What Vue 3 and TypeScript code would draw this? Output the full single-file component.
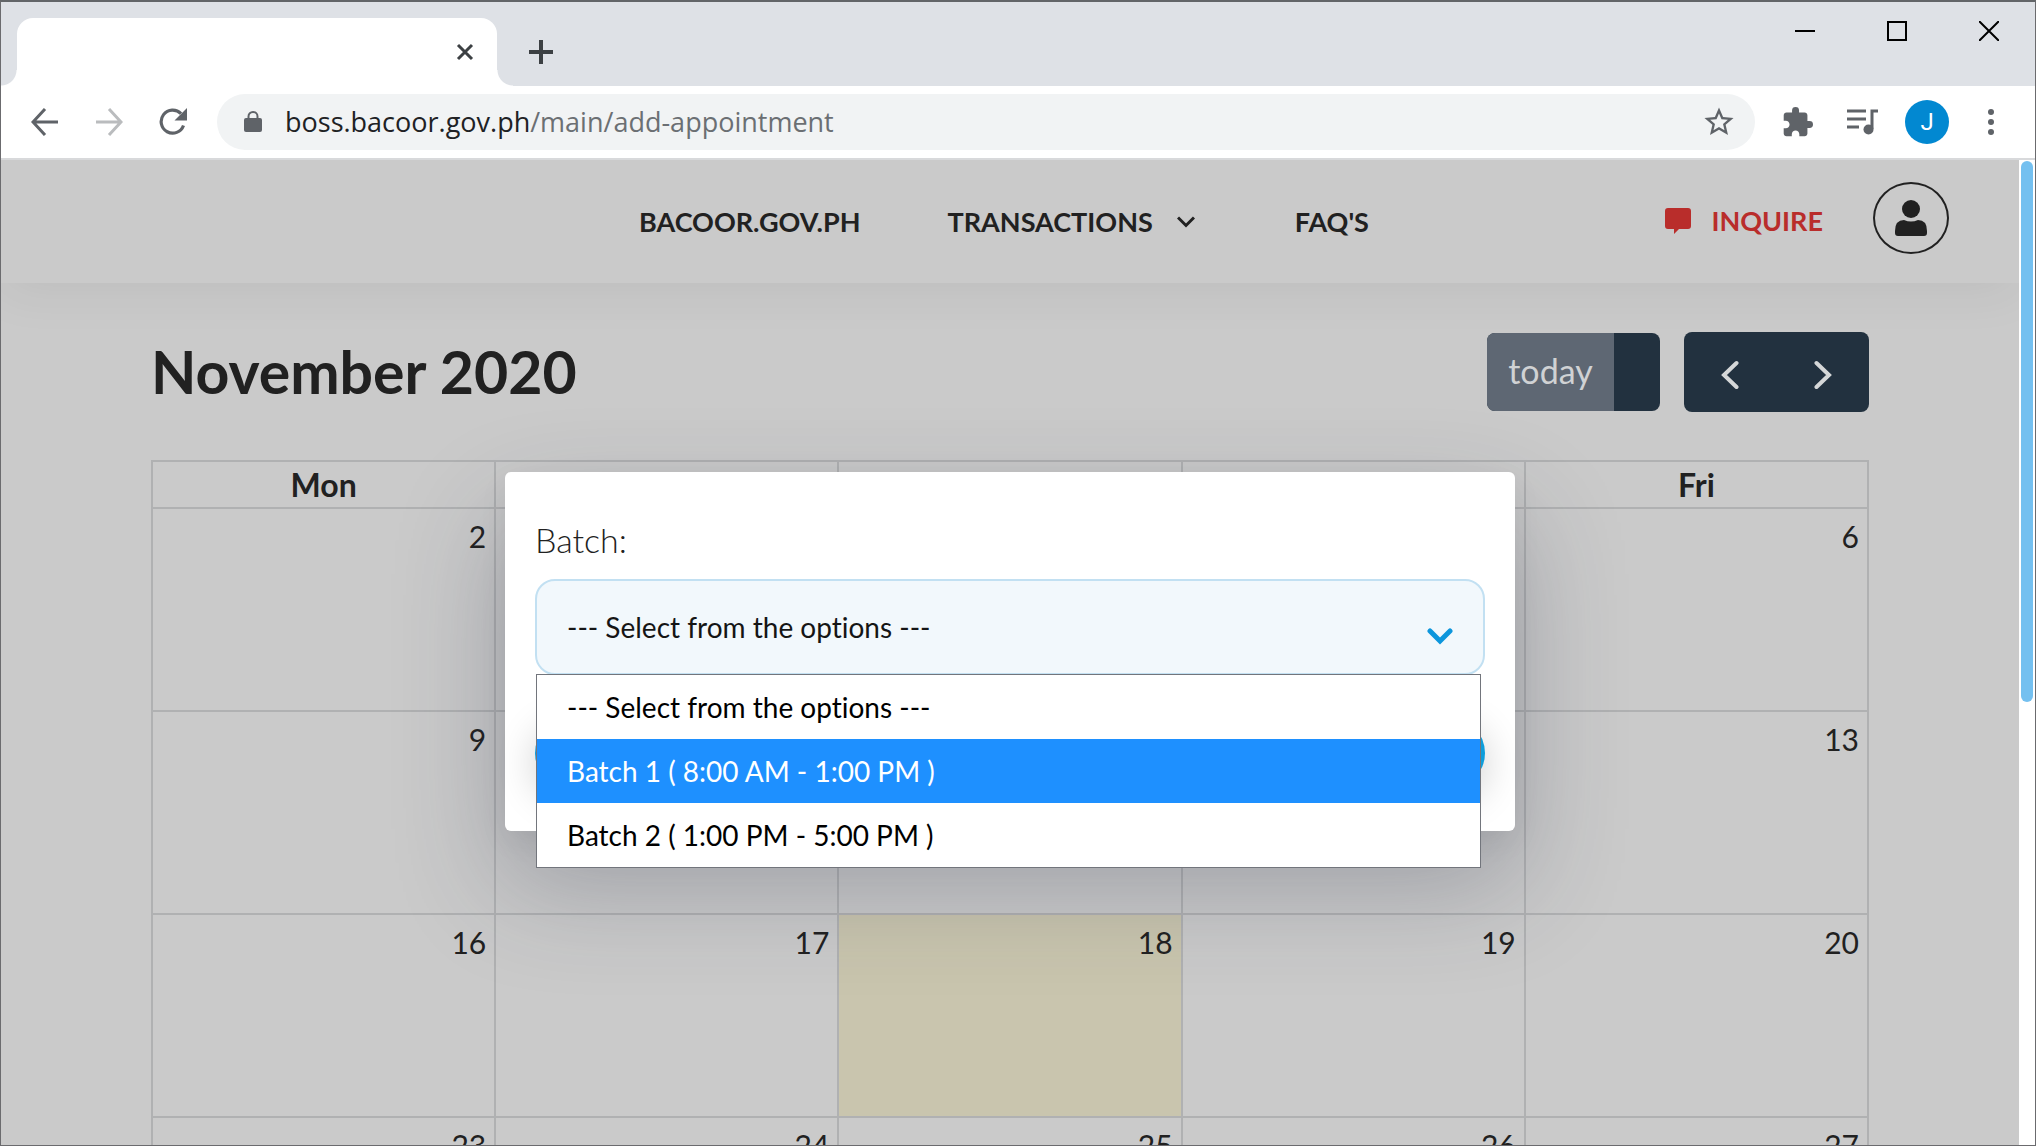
<script setup lang="ts">
import { ref } from 'vue'

interface Day {
  label: string
  today?: boolean
}

const weekdays: string[] = ['Mon', '', '', '', 'Fri']

const weeks: Day[][] = [
  [{ label: '2' }, { label: '' }, { label: '' }, { label: '' }, { label: '6' }],
  [{ label: '9' }, { label: '' }, { label: '' }, { label: '' }, { label: '13' }],
  [{ label: '16' }, { label: '17' }, { label: '18', today: true }, { label: '19' }, { label: '20' }],
  [{ label: '23' }, { label: '24' }, { label: '25' }, { label: '26' }, { label: '27' }],
]

const options: string[] = [
  '--- Select from the options ---',
  'Batch 1 ( 8:00 AM - 1:00 PM )',
  'Batch 2 ( 1:00 PM - 5:00 PM )',
]

const selected = ref(options[0])
const highlighted = ref(1)
</script>

<template>
  <div class="window">
    <div class="tabstrip">
      <div class="tab">
        <button class="plain" aria-label="Close tab">
          <svg width="18" height="18" viewBox="0 0 18 18"><path d="M2 2l14 14M16 2L2 16" stroke="#3c4043" stroke-width="3" fill="none" /></svg>
        </button>
      </div>
      <button class="plain new-tab" aria-label="New tab">
        <svg width="24" height="24" viewBox="0 0 24 24"><path d="M12 0v24M0 12h24" stroke="#3c4043" stroke-width="4" fill="none" /></svg>
      </button>
      <div class="controls">
        <button class="plain" aria-label="Minimize">
          <svg width="20" height="20" viewBox="0 0 20 20"><path d="M0 10h20" stroke="#000" stroke-width="2" /></svg>
        </button>
        <button class="plain" aria-label="Maximize">
          <svg width="20" height="20" viewBox="0 0 20 20"><path d="M1 1h18v18H1z" stroke="#000" stroke-width="2" fill="none" /></svg>
        </button>
        <button class="plain" aria-label="Close">
          <svg width="20" height="20" viewBox="0 0 20 20"><path d="M0 0l20 20M20 0L0 20" stroke="#000" stroke-width="2" fill="none" /></svg>
        </button>
      </div>
    </div>

    <div class="toolbar">
      <div class="nav-buttons">
        <button class="plain" aria-label="Back">
          <svg width="28" height="28" viewBox="0 0 28 28"><path d="M27 14H3M14 1L2 14l12 13" stroke="#5f6368" stroke-width="3" fill="none" /></svg>
        </button>
        <button class="plain" aria-label="Forward">
          <svg width="28" height="28" viewBox="0 0 28 28"><path d="M1 14h24M14 1l12 13-12 13" stroke="#babcbe" stroke-width="3" fill="none" /></svg>
        </button>
        <button class="plain" aria-label="Reload">
          <svg width="28" height="28" viewBox="0 0 28 28"><path d="M24.500 17.500A11.500 11.500 0 1 1 22 5.700" stroke="#5f6368" stroke-width="3.200" fill="none" /><path d="M28 0v12.500H15.500z" fill="#5f6368" /></svg>
        </button>
      </div>
      <div class="omnibox">
        <svg width="18" height="22" viewBox="0 0 18 22"><path d="M2 7h14q2 0 2 2v10q0 2-2 2H2q-2 0-2-2V9q0-2 2-2z" fill="#5f6368" /><path d="M4.500 8V5.500a4.500 4.500 0 0 1 9 0V8" stroke="#5f6368" stroke-width="2" fill="none" /></svg>
        <a class="url" href="#"><span class="host">boss.bacoor.gov.ph</span>/main/add-appointment</a>
        <button class="plain" aria-label="Bookmark">
          <svg width="32" height="32" viewBox="1 1 22 22"><path fill="#5f6368" d="M22 9.240l-7.190-.620L12 2 9.190 8.630 2 9.240l5.460 4.730L5.820 21 12 17.270 18.180 21l-1.630-7.030L22 9.240zM12 15.400l-3.760 2.270 1-4.280-3.320-2.880 4.380-.380L12 6.100l1.710 4.040 4.380.380-3.320 2.880 1 4.280L12 15.400z" /></svg>
        </button>
      </div>
      <div class="actions">
        <button class="plain" aria-label="Extensions">
          <svg width="30" height="30" viewBox="1.500 1 21.500 21.500"><path fill="#5f6368" d="M20.500 11H19V7c0-1.100-.900-2-2-2h-4V3.500a2.500 2.500 0 0 0-5 0V5H4c-1.100 0-1.990.900-1.990 2v3.800H3.500c1.490 0 2.700 1.210 2.700 2.700s-1.210 2.700-2.700 2.700H2V20c0 1.100.900 2 2 2h3.800v-1.500c0-1.490 1.210-2.700 2.700-2.700s2.700 1.210 2.700 2.700V22H17c1.100 0 2-.900 2-2v-4h1.500a2.500 2.500 0 0 0 0-5z" /></svg>
        </button>
        <button class="plain" aria-label="Media">
          <svg width="32" height="26" viewBox="0 0 32 26"><path d="M1 2h19M1 10h19M1 18h12" stroke="#5f6368" stroke-width="3" /><path d="M32 2h-6v18" stroke="#5f6368" stroke-width="3" fill="none" /><circle cx="22.500" cy="20.500" r="5" fill="#5f6368" /></svg>
        </button>
        <button class="plain avatar" aria-label="Profile">J</button>
        <button class="plain" aria-label="Menu">
          <svg width="6" height="26" viewBox="0 0 6 26"><g fill="#5f6368"><circle cx="3" cy="3" r="3" /><circle cx="3" cy="13" r="3" /><circle cx="3" cy="23" r="3" /></g></svg>
        </button>
      </div>
    </div>

    <div class="viewport">
      <div class="page">
        <header class="site-header">
          <nav class="menu">
            <a href="#">BACOOR.GOV.PH</a>
            <a href="#" class="with-icon">TRANSACTIONS
              <svg width="18" height="12" viewBox="0 0 18 12"><path d="M1 1.500l8 8 8-8" stroke="#212121" stroke-width="3" fill="none" /></svg>
            </a>
            <a href="#">FAQ'S</a>
          </nav>
          <div class="account">
            <a href="#" class="inquire">
              <svg width="26" height="26" viewBox="0 0 26 26"><path d="M3 0h20q3 0 3 3v15q0 3-3 3h-9l-5 5v-5H3q-3 0-3-3V3q0-3 3-3z" fill="#b92d2b" /></svg>
              INQUIRE
            </a>
            <button class="plain user" aria-label="Account">
              <svg width="32" height="36" viewBox="0 0 32 36"><circle cx="16" cy="9" r="9" fill="#212121" /><path d="M9 20q7 3 14 0 9 0 9 11v2q0 3-3 3H3q-3 0-3-3v-2q0-11 9-11z" fill="#212121" /></svg>
            </button>
          </div>
        </header>

        <main class="calendar">
          <div class="calendar-bar">
            <h1>November 2020</h1>
            <div class="today-group"><button class="today" disabled>today</button></div>
            <div class="step-group">
              <button aria-label="Previous">
                <svg width="18" height="30" viewBox="0 0 18 30"><path d="M15.500 3L3 15l12.500 12" stroke="#d5d7d8" stroke-width="4" stroke-linecap="round" fill="none" /></svg>
              </button>
              <button aria-label="Next">
                <svg width="18" height="30" viewBox="0 0 18 30"><path d="M2.500 3L15 15 2.500 27" stroke="#d5d7d8" stroke-width="4" stroke-linecap="round" fill="none" /></svg>
              </button>
            </div>
          </div>
          <table>
            <thead>
              <tr><th v-for="(day, i) in weekdays" :key="i" scope="col">{{ day }}</th></tr>
            </thead>
            <tbody>
              <tr v-for="(week, w) in weeks" :key="w">
                <td v-for="(day, d) in week" :key="d" :class="{ current: day.today }">{{ day.label }}</td>
              </tr>
            </tbody>
          </table>
        </main>

        <div class="overlay">
          <form class="modal" @submit.prevent>
            <label for="batch">Batch:</label>
            <div class="field">
              <select id="batch" v-model="selected">
                <option v-for="option in options" :key="option">{{ option }}</option>
              </select>
              <svg class="caret" width="26" height="18" viewBox="0 0 26 18"><path d="M3 3l10 10L23 3" stroke="#0d96dc" stroke-width="5" stroke-linecap="round" fill="none" /></svg>
              <ul class="dropdown" role="listbox">
                <li
                  v-for="(option, i) in options"
                  :key="option"
                  role="option"
                  :aria-selected="i === highlighted"
                  :class="{ active: i === highlighted }"
                  @mouseenter="highlighted = i"
                  @click="selected = option"
                >{{ option }}</li>
              </ul>
            </div>
            <button class="submit" type="submit" aria-label="Submit"></button>
          </form>
        </div>
      </div>
      <div class="scrollbar"><div class="thumb"></div></div>
    </div>
  </div>
</template>

<style>
body {
  overflow: hidden;
}
</style>

<style scoped>
* {
  box-sizing: border-box;
}
.window {
  display: flex;
  flex-direction: column;
  height: 100vh;
  border: 1px solid #6b6b6e;
  border-top: 2px solid #626568;
  font-family: Lato, 'Open Sans', sans-serif;
  font-variant-ligatures: none;
  color: #212121;
}
svg {
  display: block;
  flex: none;
}
a {
  color: inherit;
  text-decoration: none;
}
.plain {
  display: flex;
  align-items: center;
  justify-content: center;
  flex: none;
  padding: 0;
  border: 0;
  background: none;
}
.tabstrip {
  display: flex;
  flex: none;
  height: 84px;
  padding: 16px 36px 0 16px;
  background: #dee1e6;
}
.tab {
  position: relative;
  display: flex;
  align-items: center;
  justify-content: flex-end;
  width: 480px;
  padding-right: 23px;
  border-radius: 16px 16px 0 0;
  background: #fff;
}
.tab::before,
.tab::after {
  content: '';
  position: absolute;
  bottom: 0;
  width: 16px;
  height: 16px;
}
.tab::before {
  right: 100%;
  background: radial-gradient(circle at 0 0, #dee1e6 15px, #fff 16px);
}
.tab::after {
  left: 100%;
  background: radial-gradient(circle at 100% 0, #dee1e6 15px, #fff 16px);
}
.new-tab {
  margin-left: 32px;
}
.controls {
  display: flex;
  align-items: flex-start;
  gap: 72px;
  margin-left: auto;
  padding-top: 3px;
}
.toolbar {
  display: flex;
  align-items: center;
  flex: none;
  height: 74px;
  padding: 0 41px 0 30px;
  border-bottom: 2px solid #d8d9db;
  background: #fff;
}
.nav-buttons {
  display: flex;
  gap: 36px;
  margin-right: 30px;
}
.omnibox {
  display: flex;
  align-items: center;
  flex: 1;
  height: 56px;
  padding: 0 20px 0 27px;
  border-radius: 28px;
  background: #f1f3f4;
}
.url {
  flex: 1;
  margin-left: 23px;
  font: 27px/36px 'Open Sans', sans-serif;
  color: #6b6f73;
}
.host {
  color: #202124;
}
.actions {
  display: flex;
  align-items: center;
  gap: 33px;
  margin-left: 28px;
}
.avatar {
  width: 44px;
  height: 44px;
  margin: 0 6px 0 -6px;
  border-radius: 50%;
  background: #0288d1;
  color: #fff;
  font: 24px/44px Roboto, sans-serif;
}
.viewport {
  display: flex;
  flex: 1;
  min-height: 0;
}
.page {
  position: relative;
  flex: 1;
  overflow: hidden;
  background: #cacaca;
}
.scrollbar {
  width: 16px;
  padding: 1px 2px;
  background: #fff;
}
.thumb {
  height: 55%;
  border-radius: 6px;
  background: #74c0f0;
}
.site-header {
  display: flex;
  justify-content: space-between;
  height: 123px;
  padding: 0 70px 0 638px;
  box-shadow: 0 10px 50px rgba(0, 0, 0, 0.06);
}
.menu {
  display: flex;
  align-items: center;
  gap: 87px;
  font-size: 27px;
  font-weight: 700;
}
.with-icon {
  display: flex;
  align-items: center;
  gap: 24px;
}
.with-icon + a {
  margin-left: 13px;
}
.account {
  display: flex;
  align-items: center;
  gap: 50px;
  padding-bottom: 8px;
}
.inquire {
  display: flex;
  align-items: center;
  gap: 20px;
  padding-top: 6px;
  color: #b92d2b;
  font-size: 27px;
  font-weight: 700;
}
.user {
  width: 76px;
  height: 72px;
  border: 2px solid #212121;
  border-radius: 50%;
}
.calendar {
  padding: 48px 150px 0 150px;
}
.calendar-bar {
  display: flex;
  align-items: center;
  height: 82px;
  margin-bottom: 47px;
}
h1 {
  flex: 1;
  margin: 0;
  font-size: 59px;
  line-height: 70px;
}
.today-group,
.step-group {
  display: flex;
  width: 173px;
  height: 78px;
  border-radius: 8px;
  background: #22313f;
  overflow: hidden;
}
.step-group {
  width: 185px;
  height: 80px;
  margin-left: 24px;
}
.today-group button,
.step-group button {
  padding: 0;
  border: 0;
  background: none;
}
.today-group .today {
  width: 127px;
  padding-bottom: 2px;
  background: #5e6773;
  color: #d0d2d4;
  font: 34px/40px Lato, sans-serif;
}
.step-group button {
  display: flex;
  flex: 1;
  align-items: center;
  justify-content: center;
  padding-top: 6px;
}
table {
  width: 100%;
  border-collapse: collapse;
  table-layout: fixed;
}
th,
td {
  border: 2px solid #b0b1b2;
}
th {
  height: 47px;
  padding: 0;
  font-size: 32px;
  line-height: 40px;
}
td {
  height: 203px;
  padding: 7px 8px 0 0;
  font-size: 30px;
  line-height: 40px;
  text-align: right;
  vertical-align: top;
}
.current {
  background: #c9c5ae;
}
.overlay {
  position: absolute;
  inset: 0;
  display: flex;
  align-items: flex-start;
  justify-content: center;
  padding-top: 312px;
}
.modal {
  display: flex;
  flex-direction: column;
  width: calc(50% + 1px);
  height: 359px;
  padding: 48px 30px 0;
  border-radius: 6px;
  background: #fff;
  box-shadow: 0 50px 110px rgba(40, 46, 68, 0.3), 0 10px 30px rgba(0, 0, 0, 0.06);
}
label {
  font-size: 34px;
  line-height: 40px;
  font-weight: 300;
}
.field {
  position: relative;
  z-index: 1;
  margin-top: 19px;
}
select {
  display: block;
  width: 100%;
  height: 96px;
  padding: 0 30px;
  appearance: none;
  border: 2px solid #c2e0f2;
  border-radius: 20px;
  background: #f2f8fc;
  color: #151515;
  font: 28px/36px Lato, sans-serif;
  font-variant-ligatures: none;
}
.caret {
  position: absolute;
  top: 49px;
  right: 32px;
  pointer-events: none;
}
.dropdown {
  position: absolute;
  top: 95px;
  left: 1px;
  right: 4px;
  margin: 0;
  padding: 0;
  border: 1px solid #72757c;
  background: #fff;
  list-style: none;
}
.dropdown li {
  padding: 0 30px;
  color: #000;
  font-size: 28px;
  line-height: 64px;
}
.dropdown .active {
  background: #1e90ff;
  color: #fff;
}
.submit {
  height: 72px;
  margin-top: 42px;
  border: 0;
  border-radius: 36px;
  background: #0d9ddb;
  box-shadow: 0 10px 40px rgba(0, 0, 0, 0.2);
}
</style>
